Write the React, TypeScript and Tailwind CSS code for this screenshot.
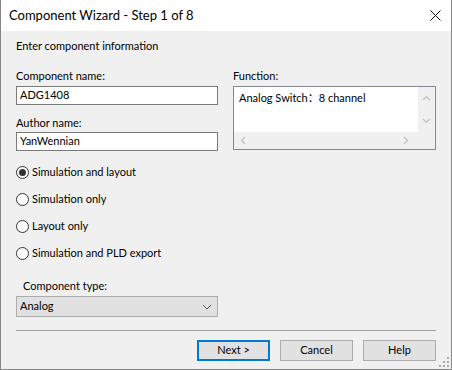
import React from 'react'

const font = { fontFamily: 'Lato, "Noto Sans", "Noto Sans CJK SC", sans-serif' }

function Radio({ label, checked }: { label: string; checked?: boolean }) {
  return (
    <div className="flex items-center h-[27px]">
      <span className="w-[13px] h-[13px] rounded-full border border-[#333] bg-white flex items-center justify-center">
        {checked && <span className="w-[7px] h-[7px] rounded-full bg-[#333]" />}
      </span>
      <span className="ml-[3px] text-[11px] text-black">{label}</span>
    </div>
  )
}

function Button({ label, primary }: { label: string; primary?: boolean }) {
  return (
    <button
      className={
        primary
          ? 'w-[73px] h-[21px] bg-[#e1e1e1] border-2 border-[#0078d7] text-[11px] text-black'
          : 'w-[73px] h-[21px] bg-[#e1e1e1] border border-[#adadad] text-[11px] text-black'
      }
    >
      {label}
    </button>
  )
}

function Chevron({ d }: { d: string }) {
  return (
    <svg width="9" height="6" viewBox="0 0 9 6" className="block">
      <path d={d} fill="none" stroke="#c0c0c0" strokeWidth="1.2" />
    </svg>
  )
}

export default function App() {
  return (
    <div
      className="relative w-[452px] h-[370px] bg-[#f0f0f0] border-l border-r border-b border-[#888] flex flex-col overflow-hidden text-[11px]"
      style={font}
    >
      {/* Title bar */}
      <div className="h-[31px] bg-white flex items-center justify-between pl-[8px] pr-[10px] shrink-0">
        <span className="text-[13px] text-black">Component Wizard - Step 1 of 8</span>
        <svg width="11" height="11" viewBox="0 0 11 11">
          <path d="M0.5 0.5 L10.5 10.5 M10.5 0.5 L0.5 10.5" stroke="#111" strokeWidth="1" />
        </svg>
      </div>

      <div className="flex flex-col px-[15px]">
        <div className="mt-[7px] h-[16px] leading-[16px]">Enter component information</div>

        <div className="mt-[14px] flex gap-[15px]">
          {/* Left column */}
          <div className="w-[202px] flex flex-col">
            <div className="h-[16px] leading-[16px]">Component name:</div>
            <div className="mt-[2px] h-[19px] bg-white border border-[#7a7a7a] px-[3px] flex items-center">
              ADG1408
            </div>
            <div className="mt-[10px] h-[16px] leading-[16px]">Author name:</div>
            <div className="mt-[1px] h-[19px] bg-white border border-[#7a7a7a] px-[3px] flex items-center">
              YanWennian
            </div>
          </div>

          {/* Right column */}
          <div className="w-[203px] flex flex-col">
            <div className="h-[16px] leading-[16px]">Function:</div>
            <div className="mt-[2px] h-[64px] border border-[#828790] bg-[#f0f0f0] flex flex-col">
              <div className="flex flex-1">
                <div className="flex-1 bg-white px-[5px] pt-[3px] leading-[16px]">
                  Analog Switch：8 channel
                </div>
                <div className="w-[17px] flex flex-col items-center justify-between py-[8px]">
                  <Chevron d="M1 5 L4.5 1.5 L8 5" />
                  <Chevron d="M1 1 L4.5 4.5 L8 1" />
                </div>
              </div>
              <div className="h-[17px] flex items-center justify-between px-[6px] pr-[26px]">
                <svg width="6" height="9" viewBox="0 0 6 9">
                  <path d="M5 1 L1.5 4.5 L5 8" fill="none" stroke="#c0c0c0" strokeWidth="1.2" />
                </svg>
                <svg width="6" height="9" viewBox="0 0 6 9">
                  <path d="M1 1 L4.5 4.5 L1 8" fill="none" stroke="#c0c0c0" strokeWidth="1.2" />
                </svg>
              </div>
            </div>
          </div>
        </div>

        {/* Radios */}
        <div className="mt-[8px] flex flex-col">
          <Radio label="Simulation and layout" checked />
          <Radio label="Simulation only" />
          <Radio label="Layout only" />
          <Radio label="Simulation and PLD export" />
        </div>

        {/* Component type */}
        <div className="mt-[11px] pl-[7px] h-[16px] leading-[16px]">Component type:</div>
        <div className="mt-[2px] w-[202px] h-[21px] bg-[#e1e1e1] border border-[#adadad] flex items-center justify-between pl-[3px] pr-[5px]">
          <span>Analog</span>
          <svg width="10" height="6" viewBox="0 0 10 6">
            <path d="M1 1 L5 5 L9 1" fill="none" stroke="#555" strokeWidth="1" />
          </svg>
        </div>

        <div className="mt-[13px] h-px bg-[#a0a0a0] w-[420px]" />
        <div className="mt-[9px] flex justify-end gap-[10px] w-[420px]">
          <Button label="Next >" primary />
          <Button label="Cancel" />
          <Button label="Help" />
        </div>
      </div>

      {/* Resize grip */}
      <svg className="absolute right-[1px] bottom-[1px]" width="11" height="11" viewBox="0 0 11 11">
        <rect x="8" y="0" width="2" height="2" fill="#aaa" />
        <rect x="4" y="4" width="2" height="2" fill="#aaa" />
        <rect x="8" y="4" width="2" height="2" fill="#aaa" />
        <rect x="0" y="8" width="2" height="2" fill="#aaa" />
        <rect x="4" y="8" width="2" height="2" fill="#aaa" />
        <rect x="8" y="8" width="2" height="2" fill="#aaa" />
      </svg>
    </div>
  )
}
